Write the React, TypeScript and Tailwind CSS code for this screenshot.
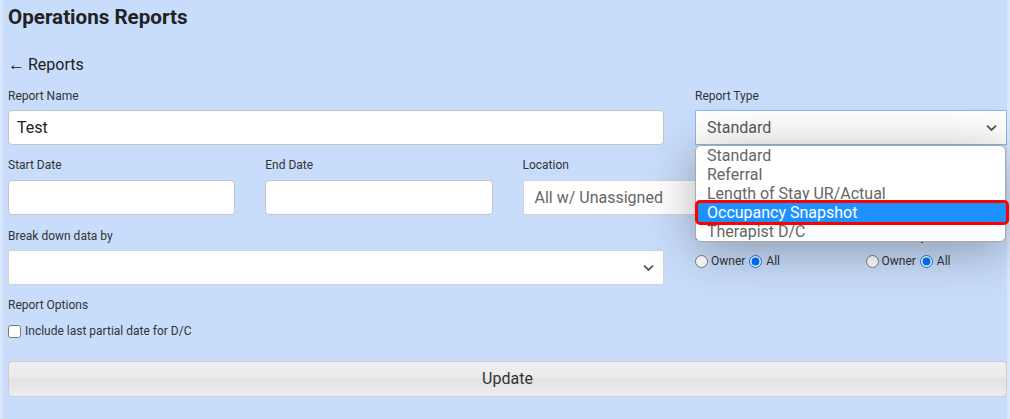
import React from "react";

function Chevron() {
  return (
    <svg width="11" height="7" viewBox="0 0 11 7" className="absolute right-[9px] top-1/2 -translate-y-1/2">
      <path d="M1 1.2 L5.5 5.5 L10 1.2" fill="none" stroke="#555" strokeWidth="1.8" />
    </svg>
  );
}

export default function App() {
  const items = ["Standard", "Referral", "Length of Stay UR/Actual", "Occupancy Snapshot", "Therapist D/C"];
  return (
    <div className="w-[1010px] h-[419px] bg-[#dbe8fc] overflow-hidden font-['Roboto',sans-serif]">
      <div className="mx-[3px] h-full bg-[#c8ddfb] pl-[5px] text-[#222]">
        <div className="pt-[5px] h-[29px] leading-[24px] text-[20.6px] font-bold text-[#222]">Operations Reports</div>
        <div className="mt-[25px] h-[20px] leading-[20px] text-[16px] text-[#222]">
          <span className="inline-block w-[20px] text-[17px]">←</span>Reports
        </div>

        <div className="mt-[14px] grid grid-cols-12 gap-x-[30px] text-[12px] text-[#333]">
          {/* Row 1 */}
          <div className="col-span-8">
            <div className="leading-[16px] h-[16px]">Report Name</div>
            <div className="mt-[6px] h-[35px] bg-white border border-[#c4c4c4] rounded-[4px] px-[8px] flex items-center text-[16px] text-[#222]">
              Test
            </div>
          </div>
          <div className="col-span-4 relative pl-[1px]">
            <div className="leading-[16px] h-[16px]">Report Type</div>
            <div className="relative mt-[6px] h-[35px] bg-white border border-[#86b9ef] px-[11px] flex items-center text-[16px] text-[#5a5a5a]">
              Standard
              <Chevron />
            </div>
            <div className="absolute z-10 left-[1px] top-[57px] w-[311px] bg-white border border-[#a9a9a9] rounded-[6px] shadow-[0_8px_50px_rgba(0,0,0,0.32)] text-[16px] leading-[19px] text-[#666]">
              {items.map((it) =>
                it === "Occupancy Snapshot" ? (
                  <div key={it} className="relative h-[19px]">
                    <div className="absolute left-[-1px] right-[-4px] top-[-3px] bottom-[-3px] rounded-[5px] border-[3px] border-[#ff0000] bg-[#1e90ff] pl-[9px] leading-[19px] text-white">
                      {it}
                    </div>
                  </div>
                ) : (
                  <div key={it} className="h-[19px] pl-[11px]">{it}</div>
                )
              )}
            </div>
          </div>

          {/* Row 2 */}
          <div className="col-span-3 mt-[12px]">
            <div className="leading-[16px] h-[16px]">Start Date</div>
            <div className="mt-[7px] h-[35px] bg-white border border-[#c4c4c4] rounded-[4px]" />
          </div>
          <div className="col-span-3 mt-[12px]">
            <div className="leading-[16px] h-[16px]">End Date</div>
            <div className="mt-[7px] h-[35px] bg-white border border-[#c4c4c4] rounded-[4px]" />
          </div>
          <div className="col-span-3 mt-[12px]">
            <div className="leading-[16px] h-[16px]">Location</div>
            <div className="mt-[7px] h-[35px] bg-white border border-[#d4d4d4] px-[11px] flex items-center text-[16px] text-[#666]">
              All w/ Unassigned
            </div>
          </div>
          <div className="col-span-3 mt-[12px]" />

          {/* Row 3 */}
          <div className="col-span-8 mt-[13px]">
            <div className="leading-[16px] h-[16px]">Break down data by</div>
            <div className="relative mt-[6px] h-[35px] bg-white border border-[#d4d4d4]">
              <Chevron />
            </div>
          </div>
          <div className="col-span-2 mt-[13px] pl-[1px]">
            <div className="leading-[16px] h-[16px] whitespace-nowrap">Lead Owner</div>
            <div className="mt-[9px] flex items-center h-[16px] whitespace-nowrap">
              <input type="radio" name="a" className="m-0 w-[13px] h-[13px]" />
              <span className="ml-[3px] mr-[4px]">Owner</span>
              <input type="radio" name="a" defaultChecked className="m-0 w-[13px] h-[13px]" />
              <span className="ml-[4px]">All</span>
            </div>
          </div>
          <div className="col-span-2 mt-[13px]">
            <div className="leading-[16px] h-[16px] whitespace-nowrap">Clinician by</div>
            <div className="mt-[9px] flex items-center h-[16px] whitespace-nowrap">
              <input type="radio" name="b" className="m-0 w-[13px] h-[13px]" />
              <span className="ml-[3px] mr-[4px]">Owner</span>
              <input type="radio" name="b" defaultChecked className="m-0 w-[13px] h-[13px]" />
              <span className="ml-[4px]">All</span>
            </div>
          </div>

          {/* Row 4 */}
          <div className="col-span-12 mt-[12px]">
            <div className="leading-[16px] h-[16px]">Report Options</div>
            <div className="mt-[10px] flex items-center h-[16px]">
              <input type="checkbox" className="m-0 w-[13px] h-[13px]" />
              <span className="ml-[4px]">Include last partial date for D/C</span>
            </div>
          </div>

          <div className="col-span-12 mt-[22px]">
            <div className="h-[36px] rounded-[4px] border border-[#cfcfcf] bg-[linear-gradient(to_bottom,#f0f0f0_0%,#ebebeb_45%,#e2e2e2_50%,#ececec_100%)] flex items-center justify-center text-[16px] text-[#333]">
              Update
            </div>
          </div>
        </div>
      </div>
    </div>
  );
}
